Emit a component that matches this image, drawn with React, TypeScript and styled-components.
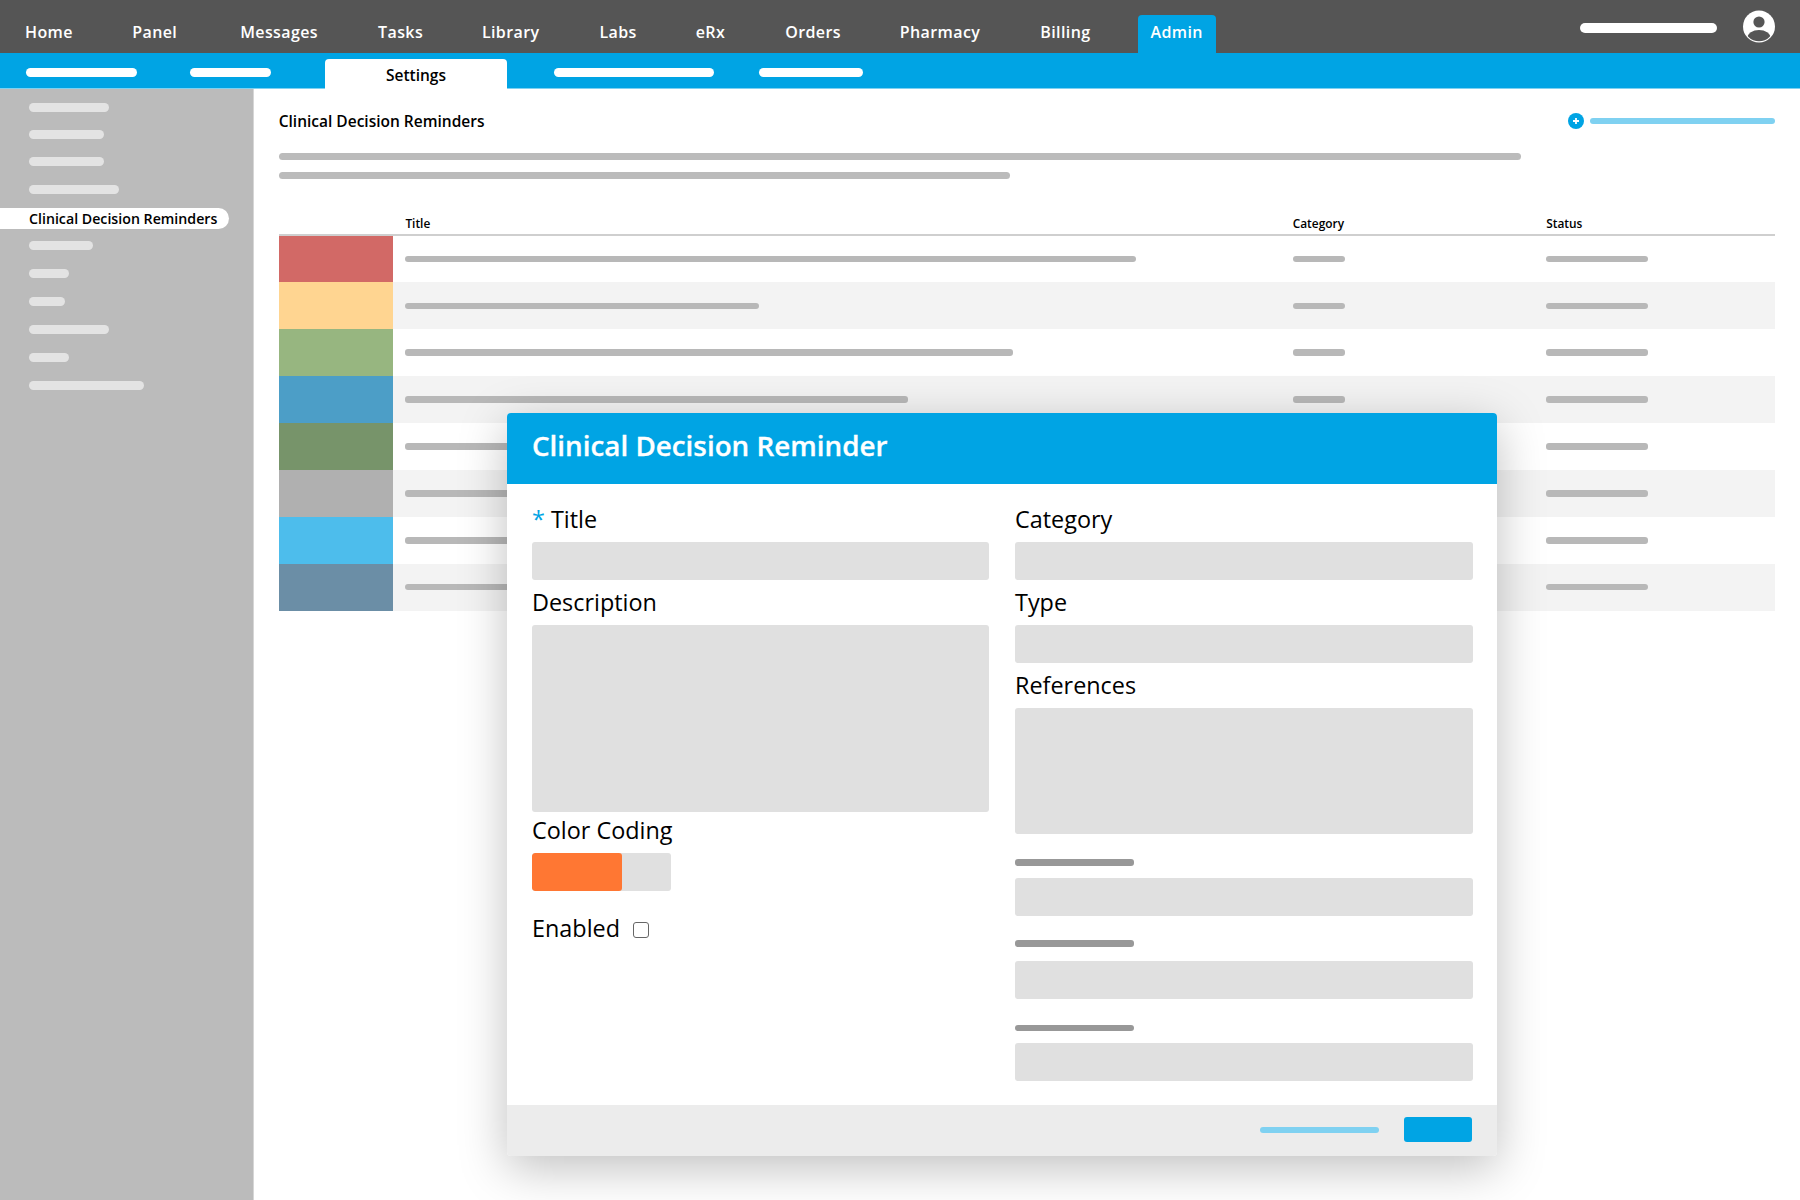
import React from "react";
import styled, { createGlobalStyle } from "styled-components";

const Global = createGlobalStyle`
  html, body { margin: 0; padding: 0; background: #fff; }
  body { font-family: "Open Sans", "Noto Sans", sans-serif; color: #000; }
  #root { width: 1800px; height: 1200px; overflow: hidden; }
`;

const Page = styled.div`
  position: relative;
  width: 1800px;
  height: 1200px;
  display: grid;
  grid-template-rows: 53px 36px 1fr;
`;

const TopNav = styled.header`
  background: #555555;
  display: flex;
  align-items: flex-end;
  padding: 0 25px 0 12px;
`;

const NavItem = styled.div<{ $active?: boolean; $gap: number }>`
  height: 38px;
  box-sizing: border-box;
  padding: 0 13px 4px;
  margin-right: ${(p) => p.$gap}px;
  display: flex;
  align-items: center;
  font-size: 16px;
  font-weight: 600;
  letter-spacing: 0.4px;
  color: #fff;
  border-radius: 4px 4px 0 0;
  background: ${(p) => (p.$active ? "#00a4e4" : "transparent")};
`;

const NavRight = styled.div`
  margin-left: auto;
  align-self: center;
  display: flex;
  align-items: center;
  gap: 26px;
`;

const NavPill = styled.div`
  width: 137px;
  height: 10px;
  border-radius: 5px;
  background: #fff;
  margin-top: 2px;
`;

const Avatar = styled.svg`
  width: 32px;
  height: 33px;
  display: block;
`;

const SubNav = styled.nav`
  background: #00a4e4;
  display: flex;
  align-items: flex-end;
  padding-left: 26px;
  border-bottom: 1px solid #7fd1f1;
  box-sizing: border-box;
`;

const SubPill = styled.div<{ $w: number; $ml: number }>`
  width: ${(p) => p.$w}px;
  margin-left: ${(p) => p.$ml}px;
  height: 9px;
  border-radius: 5px;
  background: #fff;
  align-self: flex-start;
  margin-top: 14.5px;
`;

const SubTab = styled.div`
  width: 182px;
  height: 30px;
  box-sizing: border-box;
  margin: 0 0 -1px 54px;
  padding-top: 2px;
  background: #fff;
  border-radius: 4px 4px 0 0;
  display: flex;
  align-items: center;
  justify-content: center;
  font-size: 15.5px;
  font-weight: 600;
`;

const Body = styled.div`
  display: grid;
  grid-template-columns: 254px 1fr;
  min-height: 0;
`;

const Sidebar = styled.aside`
  background: #bbbbbb;
  border-right: 1px solid #d6d6d6;
  box-sizing: border-box;
  padding-top: 4.5px;
  display: flex;
  flex-direction: column;
`;

const SideRow = styled.div<{ $h: number }>`
  height: ${(p) => p.$h}px;
  padding-left: 29px;
  display: flex;
  align-items: center;
  flex-shrink: 0;
`;

const SidePill = styled.div<{ $w: number }>`
  width: ${(p) => p.$w}px;
  height: 9px;
  border-radius: 5px;
  background: #e3e3e3;
`;

const SideActive = styled.div`
  width: 228.5px;
  height: 21px;
  margin: 5px 0 3px;
  padding-left: 29px;
  box-sizing: border-box;
  flex-shrink: 0;
  background: #fff;
  border-radius: 0 11px 11px 0;
  display: flex;
  align-items: center;
  font-size: 14.2px;
  font-weight: 600;
  white-space: nowrap;
`;

const Main = styled.main`
  padding: 20px 25px 0 24.7px;
`;

const HeadingRow = styled.div`
  display: flex;
  align-items: center;
  justify-content: space-between;
  height: 24px;
`;

const Heading = styled.h1`
  margin: 0;
  font-size: 15.5px;
  font-weight: 600;
  line-height: 24px;
`;

const AddAction = styled.div`
  display: flex;
  align-items: center;
  gap: 6px;
`;

const AddIcon = styled.svg`
  width: 16px;
  height: 16px;
  display: block;
`;

const AddBar = styled.div`
  width: 185px;
  height: 6px;
  border-radius: 3px;
  background: #7fd1f1;
`;

const Lines = styled.div`
  margin-top: 20px;
  display: flex;
  flex-direction: column;
  gap: 12px;
`;

const Line = styled.div<{ $w: number }>`
  width: ${(p) => p.$w}px;
  height: 7px;
  border-radius: 4px;
  background: #bbbbbb;
`;

const columns = "126.7px 887.3px 253.5px 1fr";

const HeaderRow = styled.div`
  margin-top: 35.5px;
  height: 21px;
  box-sizing: border-box;
  padding-bottom: 2px;
  border-bottom: 2px solid #cfcfcf;
  display: grid;
  grid-template-columns: ${columns};
  align-items: center;
  font-size: 11.9px;
  font-weight: 600;
`;

const HeaderCell = styled.div<{ $col: number }>`
  grid-column: ${(p) => p.$col};
`;

const Row = styled.div<{ $alt: boolean }>`
  height: 46.9px;
  display: grid;
  grid-template-columns: ${columns};
  align-items: center;
  background: ${(p) => (p.$alt ? "#f3f3f3" : "#fff")};
`;

const Swatch = styled.div<{ $c: string }>`
  width: 114.3px;
  height: 100%;
  background: ${(p) => p.$c};
`;

const Bar = styled.div<{ $w: number }>`
  width: ${(p) => p.$w}px;
  height: 6.5px;
  border-radius: 3px;
  background: #b8b8b8;
`;

const Modal = styled.section`
  position: absolute;
  left: 507px;
  top: 413px;
  width: 989.5px;
  height: 743px;
  background: #fff;
  border-radius: 4px;
  box-shadow: 0 12px 48px rgba(0, 0, 0, 0.25);
  display: flex;
  flex-direction: column;
  overflow: hidden;
`;

const ModalHeader = styled.div`
  height: 70.5px;
  flex-shrink: 0;
  background: #00a4e4;
  box-sizing: border-box;
  padding: 0 0 6px 25px;
  display: flex;
  align-items: center;
  color: #fff;
  font-size: 27.8px;
  font-weight: 600;
  -webkit-text-stroke: 0.3px #fff;
`;

const ModalBody = styled.div`
  flex: 1;
  display: grid;
  grid-template-columns: 457px 458px;
  column-gap: 26px;
  padding: 17px 24.5px 0 25px;
`;

const Column = styled.div`
  display: flex;
  flex-direction: column;
`;

const Label = styled.label`
  display: block;
  height: 33px;
  font-size: 23.4px;
  line-height: 36.5px;
  margin-bottom: 8px;
  white-space: nowrap;
`;

const Required = styled.span`
  color: #00a4e4;
  margin-right: 6px;
`;

const Input = styled.div<{ $h?: number; $mb?: number }>`
  width: 100%;
  height: ${(p) => p.$h ?? 38}px;
  margin-bottom: ${(p) => p.$mb ?? 4}px;
  background: #e0e0e0;
  border-radius: 3px;
`;

const GhostLabel = styled.div<{ $mb: number }>`
  width: 119px;
  height: 6.5px;
  border-radius: 3px;
  background: #989898;
  margin-bottom: ${(p) => p.$mb}px;
`;

const ColorTrack = styled.div`
  width: 139px;
  height: 38px;
  background: #e0e0e0;
  border-radius: 3px;
  overflow: hidden;
`;

const ColorFill = styled.div`
  width: 90px;
  height: 100%;
  background: #ff7733;
  border-radius: 3px;
`;

const EnabledRow = styled.div`
  display: flex;
  align-items: center;
  gap: 13px;
  margin-top: 21px;
  font-size: 23.4px;
  line-height: 33px;
`;

const Checkbox = styled.div`
  width: 16px;
  height: 16px;
  box-sizing: border-box;
  border: 1.5px solid #666;
  border-radius: 3px;
  background: #fff;
  margin-top: 2px;
`;

const ModalFooter = styled.div`
  height: 51px;
  flex-shrink: 0;
  box-sizing: border-box;
  background: #ececec;
  display: flex;
  align-items: center;
  justify-content: flex-end;
  padding: 0 24.5px 1.5px 0;
  gap: 25px;
`;

const CancelBar = styled.div`
  width: 119px;
  height: 6.5px;
  border-radius: 3px;
  background: #7fd1f1;
`;

const SaveButton = styled.div`
  width: 68px;
  height: 25px;
  border-radius: 3px;
  background: #00a4e4;
`;

const navItems = [
  { n: "Home", g: 33.4 },
  { n: "Panel", g: 36.9 },
  { n: "Messages", g: 34 },
  { n: "Tasks", g: 32.8 },
  { n: "Library", g: 34 },
  { n: "Labs", g: 32.9 },
  { n: "eRx", g: 34 },
  { n: "Orders", g: 32.9 },
  { n: "Pharmacy", g: 34 },
  { n: "Billing", g: 34 },
  { n: "Admin", g: 0 },
];
const sideTop = [80, 75, 75, 90];
const sideBottom = [64, 40, 36, 80, 40, 115];
const rows = [
  { c: "#d26966", t: 731 },
  { c: "#ffd591", t: 354 },
  { c: "#97b680", t: 608 },
  { c: "#4c9ec7", t: 503 },
  { c: "#77946a", t: 500 },
  { c: "#b0b0b0", t: 420 },
  { c: "#4dbdec", t: 560 },
  { c: "#6b8ea6", t: 460 },
];

export default function App() {
  return (
    <Page>
      <Global />
      <TopNav>
        {navItems.map((i) => (
          <NavItem key={i.n} $gap={i.g} $active={i.n === "Admin"}>{i.n}</NavItem>
        ))}
        <NavRight>
          <NavPill />
          <Avatar viewBox="0 0 32 33">
            <defs>
              <clipPath id="avatarClip"><circle cx="16" cy="16.5" r="14.8" /></clipPath>
            </defs>
            <circle cx="16" cy="16.5" r="16" fill="#fff" />
            <circle cx="16" cy="12" r="5.6" fill="#555" />
            <ellipse cx="16" cy="27.5" rx="11.5" ry="7.5" fill="#555" clipPath="url(#avatarClip)" />
          </Avatar>
        </NavRight>
      </TopNav>
      <SubNav>
        <SubPill $w={111} $ml={0} />
        <SubPill $w={81} $ml={53} />
        <SubTab>Settings</SubTab>
        <SubPill $w={160} $ml={47} />
        <SubPill $w={104} $ml={45} />
      </SubNav>
      <Body>
        <Sidebar>
          {sideTop.map((w, i) => (
            <SideRow key={i} $h={27.3}><SidePill $w={w} /></SideRow>
          ))}
          <SideActive>Clinical Decision Reminders</SideActive>
          {sideBottom.map((w, i) => (
            <SideRow key={i} $h={28}><SidePill $w={w} /></SideRow>
          ))}
        </Sidebar>
        <Main>
          <HeadingRow>
            <Heading>Clinical Decision Reminders</Heading>
            <AddAction>
              <AddIcon viewBox="0 0 16 16">
                <circle cx="8" cy="8" r="8" fill="#00a4e4" />
                <path d="M8 5v6M5 8h6" stroke="#fff" strokeWidth="1.8" />
              </AddIcon>
              <AddBar />
            </AddAction>
          </HeadingRow>
          <Lines>
            <Line $w={1242} />
            <Line $w={731} />
          </Lines>
          <HeaderRow>
            <HeaderCell $col={2}>Title</HeaderCell>
            <HeaderCell $col={3}>Category</HeaderCell>
            <HeaderCell $col={4}>Status</HeaderCell>
          </HeaderRow>
          {rows.map((r, i) => (
            <Row key={i} $alt={i % 2 === 1}>
              <Swatch $c={r.c} />
              <Bar $w={r.t} />
              <Bar $w={52} />
              <Bar $w={102} />
            </Row>
          ))}
        </Main>
      </Body>
      <Modal>
        <ModalHeader>Clinical Decision Reminder</ModalHeader>
        <ModalBody>
          <Column>
            <Label><Required>*</Required>Title</Label>
            <Input />
            <Label>Description</Label>
            <Input $h={187.5} $mb={0} />
            <Label>Color Coding</Label>
            <ColorTrack><ColorFill /></ColorTrack>
            <EnabledRow>Enabled<Checkbox /></EnabledRow>
          </Column>
          <Column>
            <Label>Category</Label>
            <Input />
            <Label>Type</Label>
            <Input />
            <Label>References</Label>
            <Input $h={126.5} $mb={25} />
            <GhostLabel $mb={12} />
            <Input $mb={24.5} />
            <GhostLabel $mb={14} />
            <Input $mb={26} />
            <GhostLabel $mb={12} />
            <Input />
          </Column>
        </ModalBody>
        <ModalFooter>
          <CancelBar />
          <SaveButton />
        </ModalFooter>
      </Modal>
    </Page>
  );
}
